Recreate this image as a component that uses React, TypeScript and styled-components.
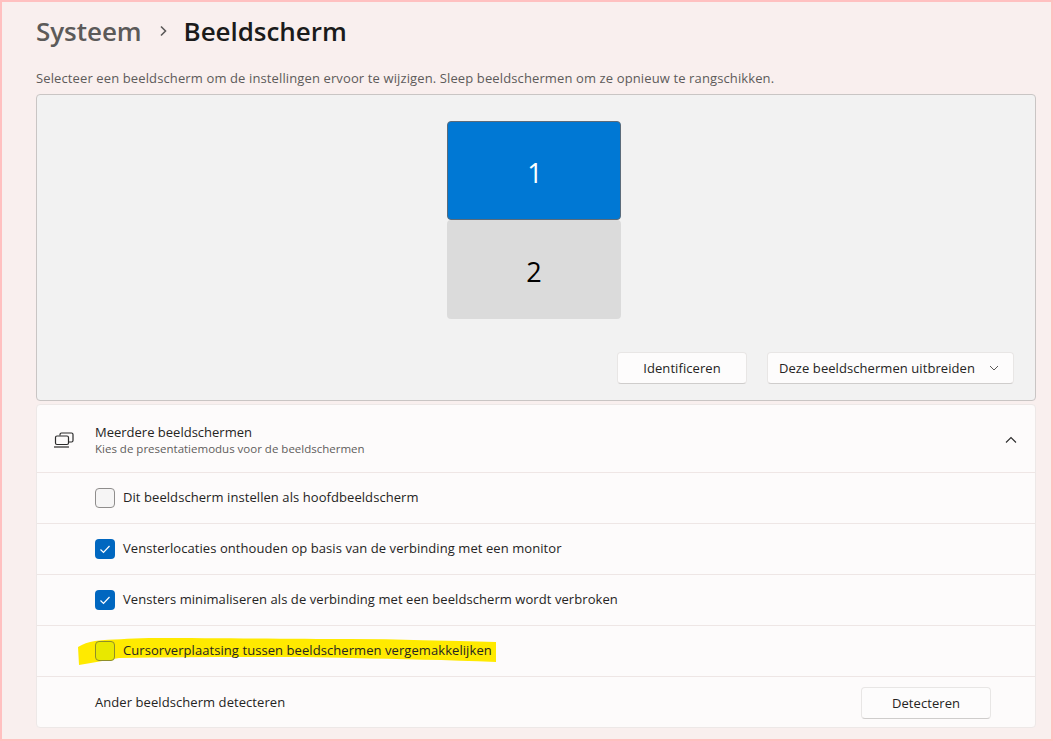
import React from 'react';
import styled, { createGlobalStyle } from 'styled-components';

const GlobalStyle = createGlobalStyle`
  html, body {
    margin: 0;
    padding: 0;
    height: 100%;
  }
  body {
    background: #f9efee;
    font-family: 'Open Sans', 'Noto Sans', sans-serif;
    overflow: hidden;
  }
  * {
    box-sizing: border-box;
  }
`;

const Frame = styled.div`
  width: 1053px;
  height: 741px;
  border: 2px solid #ffc0c0;
  padding: 0 15px 0 34px;
  background: #f9efee;
`;

const Header = styled.div`
  display: flex;
  align-items: center;
  height: 58px;
  font-size: 26px;
  font-weight: 600;
  letter-spacing: -0.05px;
`;

const Crumb = styled.span`
  color: #5c5a59;
`;

const CrumbSep = styled.span`
  display: flex;
  margin: 0 15px;
  color: #5c5a59;
`;

const Title = styled.span`
  color: #1b1b1b;
`;

const Hint = styled.div`
  margin-top: 9px;
  height: 25px;
  font-size: 13px;
  letter-spacing: 0.12px;
  line-height: 18px;
  color: #5d5b5a;
`;

const Panel = styled.div`
  height: 307px;
  background: #f2f2f2;
  border: 1px solid #c9c5c4;
  border-radius: 4px;
  padding-top: 26px;
`;

const MonitorStack = styled.div`
  display: flex;
  flex-direction: column;
  align-items: center;
  padding-right: 4px;
`;

const Monitor = styled.div<{ $active?: boolean }>`
  width: 174px;
  height: 99px;
  display: flex;
  align-items: center;
  justify-content: center;
  padding: 3px 0 0 ${(p) => (p.$active ? '2px' : '0')};
  font-size: 27px;
  border-radius: 4px;
  background: ${(p) => (p.$active ? '#0078d4' : '#dbdbdb')};
  color: ${(p) => (p.$active ? '#ffffff' : '#000000')};
  border: ${(p) => (p.$active ? '1px solid #5b6b7a' : 'none')};
`;

const PanelActions = styled.div`
  display: flex;
  justify-content: flex-end;
  gap: 20px;
  margin-top: 33px;
  padding-right: 21px;
`;

const Button = styled.button<{ $wide?: boolean }>`
  display: flex;
  align-items: center;
  justify-content: ${(p) => (p.$wide ? 'space-between' : 'center')};
  width: ${(p) => (p.$wide ? '247px' : '130px')};
  height: 32px;
  padding: ${(p) => (p.$wide ? '0 14px 0 11px' : '0')};
  background: #fdfcfc;
  border: 1px solid #e8e6e5;
  border-bottom-color: #cfcdcc;
  border-radius: 4px;
  font-family: inherit;
  font-size: 13px;
  letter-spacing: 0.07px;
  color: #252423;
`;

const Card = styled.div`
  margin-top: 3px;
  height: 324px;
  background: #fdfbfb;
  border: 1px solid #ede8e7;
  border-radius: 4px;
`;

const CardHead = styled.div`
  display: flex;
  align-items: center;
  height: 68px;
  padding: 2px 18px 0 17px;
  border-bottom: 1px solid #efe6e5;
`;

const HeadIcon = styled.span`
  display: flex;
  width: 24px;
  margin-right: 17px;
  color: #2b2b2b;
`;

const HeadText = styled.div`
  flex: 1;
`;

const HeadTitle = styled.div`
  font-size: 13px;
  line-height: 18px;
  color: #252423;
`;

const HeadSub = styled.div`
  font-size: 11.5px;
  line-height: 16px;
  color: #5f5d5c;
`;

const Row = styled.div<{ $last?: boolean }>`
  position: relative;
  display: flex;
  align-items: center;
  justify-content: space-between;
  height: 51px;
  padding: 0 44px 0 58px;
  border-bottom: ${(p) => (p.$last ? 'none' : '1px solid #eee6e5')};
  font-size: 13px;
  letter-spacing: 0.07px;
  color: #252423;
`;

const Check = styled.span<{ $checked?: boolean; $marked?: boolean }>`
  position: relative;
  display: flex;
  align-items: center;
  justify-content: center;
  width: 20px;
  height: 20px;
  margin-right: 8px;
  border-radius: 4px;
  background: ${(p) => (p.$checked ? '#0067c0' : p.$marked ? '#e8e800' : '#f6f5f5')};
  border: ${(p) =>
    p.$checked ? 'none' : p.$marked ? '1px solid #8e8e2a' : '1px solid #8f8d8c'};
`;

const RowLabel = styled.span`
  position: relative;
  flex: 1;
  top: -1px;
`;

const Marker = styled.svg`
  position: absolute;
  left: 41px;
  top: 11px;
`;

const ChevronRight = () => (
  <svg width="12" height="12" viewBox="0 0 12 12" fill="none">
    <path d="M4 1.5 8.5 6 4 10.5" stroke="currentColor" strokeWidth="1.6" />
  </svg>
);

const ChevronDown = () => (
  <svg width="10" height="10" viewBox="0 0 10 10" fill="none">
    <path d="M1 3 5 7 9 3" stroke="#5c5a59" strokeWidth="1" />
  </svg>
);

const ChevronUp = () => (
  <svg width="12" height="12" viewBox="0 0 12 12" fill="none">
    <path d="M1 8.5 6 3.5 11 8.5" stroke="#2b2b2b" strokeWidth="1.1" />
  </svg>
);

const MonitorsIcon = () => (
  <svg width="20" height="16" viewBox="0 0 20 16" fill="none">
    <path
      d="M6 3.5V2.5A1.5 1.5 0 0 1 7.5 1H17.5A1.5 1.5 0 0 1 19 2.5V8.5A1.5 1.5 0 0 1 17.5 10H15"
      stroke="currentColor"
      strokeWidth="1.2"
    />
    <rect x="1.5" y="4" width="13" height="8.5" rx="1.5" stroke="currentColor" strokeWidth="1.2" />
    <path d="M0 15H15" stroke="currentColor" strokeWidth="1.2" />
  </svg>
);

const Tick = () => (
  <svg width="12" height="12" viewBox="0 0 12 12" fill="none">
    <path d="M1.5 6.5 4.5 9.5 10.5 3" stroke="#ffffff" strokeWidth="1.2" />
  </svg>
);

const rows = [
  { label: 'Dit beeldscherm instellen als hoofdbeeldscherm', checked: false },
  { label: 'Vensterlocaties onthouden op basis van de verbinding met een monitor', checked: true },
  { label: 'Vensters minimaliseren als de verbinding met een beeldscherm wordt verbroken', checked: true },
];

const App = () => {
  return (
    <>
      <GlobalStyle />
      <Frame>
        <Header>
          <Crumb>Systeem</Crumb>
          <CrumbSep>
            <ChevronRight />
          </CrumbSep>
          <Title>Beeldscherm</Title>
        </Header>
        <Hint>
          Selecteer een beeldscherm om de instellingen ervoor te wijzigen. Sleep beeldschermen om ze opnieuw te rangschikken.
        </Hint>
        <Panel>
          <MonitorStack>
            <Monitor $active>1</Monitor>
            <Monitor>2</Monitor>
          </MonitorStack>
          <PanelActions>
            <Button>Identificeren</Button>
            <Button $wide>
              Deze beeldschermen uitbreiden
              <ChevronDown />
            </Button>
          </PanelActions>
        </Panel>
        <Card>
          <CardHead>
            <HeadIcon>
              <MonitorsIcon />
            </HeadIcon>
            <HeadText>
              <HeadTitle>Meerdere beeldschermen</HeadTitle>
              <HeadSub>Kies de presentatiemodus voor de beeldschermen</HeadSub>
            </HeadText>
            <ChevronUp />
          </CardHead>
          {rows.map((row) => (
            <Row key={row.label}>
              <Check $checked={row.checked}>{row.checked && <Tick />}</Check>
              <RowLabel>{row.label}</RowLabel>
            </Row>
          ))}
          <Row>
            <Marker width="420" height="30" viewBox="0 0 420 30">
              <path
                d="M0 10 C5 7 10 5 17 4 C35 2 50 2 71 1 C150 1 220 2 271 2 C320 2 370 4 418 5 L418 25 C370 23 320 22 274 21 C240 20 210 20 174 20 C130 20 85 20 41 21 C28 23 15 26 1 28 Z"
                fill="#ffea00"
              />
            </Marker>
            <Check $marked />
            <RowLabel>Cursorverplaatsing tussen beeldschermen vergemakkelijken</RowLabel>
          </Row>
          <Row $last>
            <RowLabel>Ander beeldscherm detecteren</RowLabel>
            <Button>Detecteren</Button>
          </Row>
        </Card>
      </Frame>
    </>
  );
};

export default App;
